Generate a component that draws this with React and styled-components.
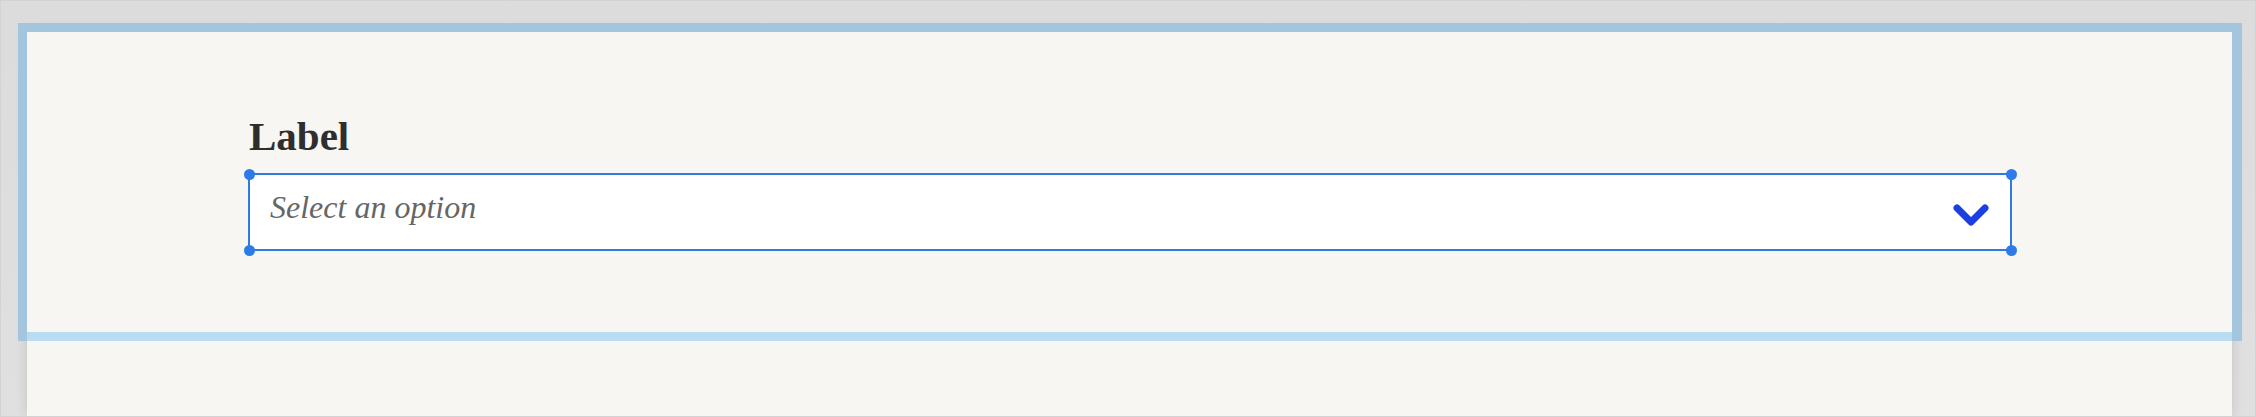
import React from "react";
import styled, { createGlobalStyle } from "styled-components";

const GlobalStyle = createGlobalStyle`
  html, body {
    margin: 0;
    padding: 0;
    background: #dfdfdf;
  }
  * { box-sizing: border-box; }
`;

const Stage = styled.div`
  height: 417px;
  overflow: hidden;
  border: 1px solid #d3d3d3;
  background: linear-gradient(#dcdcdc, #e0e0e0);
  padding: 31px 23px 0 26px;
  display: flex;
`;

const Canvas = styled.div`
  position: relative;
  flex: 1;
  background: #f7f6f3;
  box-shadow: 0 0 12px rgba(0, 0, 0, 0.13);
  padding: 84px 220px 0 221px;
`;

const SelectionFrame = styled.div`
  position: absolute;
  top: -9px;
  left: -9px;
  right: -10px;
  height: 318px;
  border-style: solid;
  border-width: 9px 10px 0 9px;
  border-color: #a3c5de;
  box-shadow: inset 0 -9px 0 #b9dcf1;
  pointer-events: none;
`;

const Field = styled.div`
  display: flex;
  flex-direction: column;
  gap: 17px;
`;

const Label = styled.label`
  font-family: "Liberation Serif", "Times New Roman", serif;
  font-weight: 700;
  font-size: 41px;
  line-height: 40px;
  color: #2e2e2e;
  padding-left: 1px;
`;

const SelectBox = styled.div`
  position: relative;
  height: 78px;
  display: flex;
  align-items: flex-start;
  justify-content: space-between;
  background: #ffffff;
  border: 1px solid #d4d4d4;
  border-radius: 10px;
  padding: 17px 22px 0 21px;
`;

const Placeholder = styled.span`
  font-family: "Liberation Serif", "Times New Roman", serif;
  font-style: italic;
  font-size: 32px;
  line-height: 32px;
  color: #666666;
`;

const Chevron = styled.svg`
  margin-top: 13px;
  flex: none;
`;

const FocusOutline = styled.div`
  position: absolute;
  inset: -1px;
  border: 2px solid #2f7be6;
  pointer-events: none;
`;

const Handle = styled.span`
  position: absolute;
  width: 11px;
  height: 11px;
  border-radius: 50%;
  background: #2f7be6;
  ${(p) => (p.$top ? "top: -6.5px;" : "bottom: -6.5px;")}
  ${(p) => (p.$left ? "left: -6.5px;" : "right: -6.5px;")}
`;

export default function App() {
  return (
    <>
      <GlobalStyle />
      <Stage>
        <Canvas>
          <Field>
            <Label>Label</Label>
            <SelectBox>
              <Placeholder>Select an option</Placeholder>
              <Chevron width="36" height="23" viewBox="0 0 36 23">
                <path
                  d="M4 4 L18 18 L32 4"
                  fill="none"
                  stroke="#1c3fe2"
                  strokeWidth="7"
                  strokeLinecap="round"
                  strokeLinejoin="round"
                />
              </Chevron>
              <FocusOutline>
                <Handle $top $left />
                <Handle $top />
                <Handle $left />
                <Handle />
              </FocusOutline>
            </SelectBox>
          </Field>
          <SelectionFrame />
        </Canvas>
      </Stage>
    </>
  );
}
